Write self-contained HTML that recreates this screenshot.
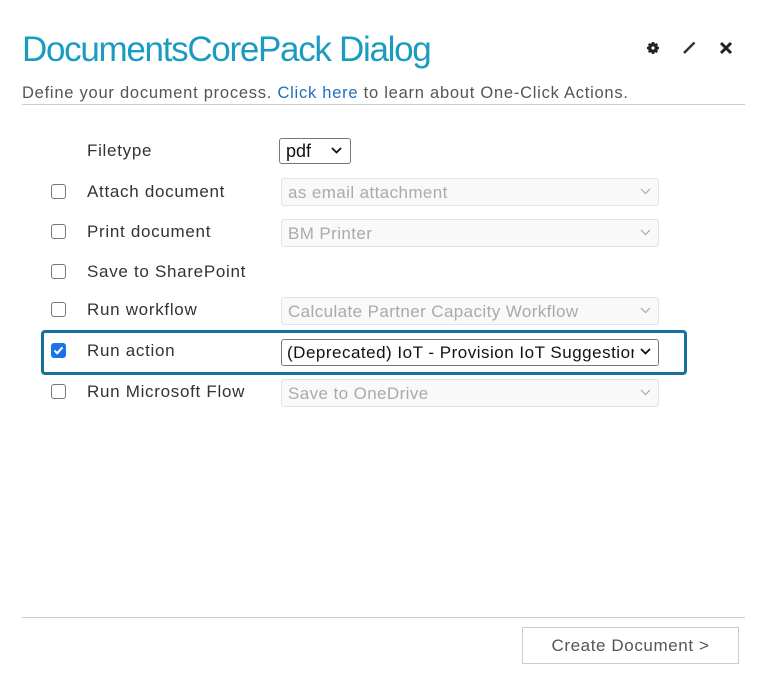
<!DOCTYPE html>
<html><head><meta charset="utf-8"><style>
*{margin:0;padding:0;box-sizing:border-box}
body{width:768px;height:695px;background:#fff;position:relative;font-family:"Liberation Sans",sans-serif;overflow:hidden}
.a{position:absolute;white-space:nowrap}
.title{left:22px;top:30px;font-size:35px;color:#1a9bc0;letter-spacing:-1.3px}
.sub{left:22px;top:84px;font-size:16.5px;color:#555;letter-spacing:0.75px}
.sub span{color:#1e6fbf}
.hr{position:absolute;height:1px;background:#ccc;left:22px;width:723px}
.lbl{left:87px;font-size:17px;color:#333;letter-spacing:0.7px}
.cb{position:absolute;left:51px;width:15px;height:15px;border:1.5px solid #777;border-radius:3px;background:#fff}
.sel{position:absolute;left:281px;width:378px;height:28px;border:1px solid #e3e3e3;border-radius:3px;background:#f9f9f9;color:#aaa;font-size:17px;padding:4px 6px;white-space:nowrap;overflow:hidden;letter-spacing:0.4px}
.ch{position:absolute;right:7px;top:9px}
</style></head><body>
<div class="a title">DocumentsCorePack Dialog</div>
<svg class="a" style="left:646px;top:41px" width="14" height="14" viewBox="0 0 14 14"><circle cx="7" cy="7" r="5" fill="#222"/><g stroke="#222" stroke-width="2.4"><line x1="7" y1="1" x2="7" y2="13"/><line x1="1" y1="7" x2="13" y2="7"/><line x1="2.8" y1="2.8" x2="11.2" y2="11.2"/><line x1="11.2" y1="2.8" x2="2.8" y2="11.2"/></g><circle cx="7" cy="7" r="1.6" fill="#fff"/></svg>
<svg class="a" style="left:682px;top:41px" width="14" height="14" viewBox="0 0 14 14"><line x1="2" y1="12" x2="11" y2="3" stroke="#333" stroke-width="2.6"/><line x1="11" y1="3" x2="12.5" y2="1.5" stroke="#333" stroke-width="2.6"/></svg>
<svg class="a" style="left:719px;top:41px" width="14" height="14" viewBox="0 0 14 14"><g stroke="#222" stroke-width="3"><line x1="2" y1="2" x2="12" y2="12"/><line x1="12" y1="2" x2="2" y2="12"/></g></svg>
<div class="a sub">Define your document process. <span>Click here</span> to learn about One-Click Actions.</div>
<div class="hr" style="top:104px"></div>

<div class="a lbl" style="top:141px">Filetype</div>
<div class="a" style="left:279px;top:138px;width:72px;height:26px;border:1px solid #777;border-radius:3px;font-size:18px;color:#111;padding:2px 0 0 6px">pdf<svg style="position:absolute;right:8px;top:8px" width="11" height="7" viewBox="0 0 11 7"><path d="M1 1l4.5 4.5L10 1" stroke="#111" stroke-width="1.8" fill="none"/></svg></div>

<div class="cb" style="top:184px"></div><div class="a lbl" style="top:182px">Attach document</div>
<div class="sel" style="top:178px">as email attachment<svg class="ch" width="11" height="7" viewBox="0 0 11 7"><path d="M1 1l4.5 4.5L10 1" stroke="#aaa" stroke-width="1.2" fill="none"/></svg></div>

<div class="cb" style="top:224px"></div><div class="a lbl" style="top:222px">Print document</div>
<div class="sel" style="top:219px">BM Printer<svg class="ch" width="11" height="7" viewBox="0 0 11 7"><path d="M1 1l4.5 4.5L10 1" stroke="#aaa" stroke-width="1.2" fill="none"/></svg></div>

<div class="cb" style="top:264px"></div><div class="a lbl" style="top:262px">Save to SharePoint</div>

<div class="cb" style="top:302px"></div><div class="a lbl" style="top:300px">Run workflow</div>
<div class="sel" style="top:297px">Calculate Partner Capacity Workflow<svg class="ch" width="11" height="7" viewBox="0 0 11 7"><path d="M1 1l4.5 4.5L10 1" stroke="#aaa" stroke-width="1.2" fill="none"/></svg></div>

<div class="a" style="left:41px;top:330px;width:646px;height:45px;border:3px solid #1a6fa0;border-radius:4px"></div>
<div class="a" style="left:51px;top:343px;width:15px;height:15px;background:#1a73e8;border-radius:3px"><svg width="15" height="15" viewBox="0 0 15 15" style="display:block"><path d="M3.5 7.5l2.7 2.8 5.3-6" stroke="#fff" stroke-width="2" fill="none"/></svg></div>
<div class="a lbl" style="top:341px">Run action</div>
<div class="a" style="left:281px;top:339px;width:378px;height:27px;border:1px solid #777;border-radius:3px;font-size:17px;color:#111;padding:3px 0 0 5px;overflow:hidden;letter-spacing:0.5px">(Deprecated) IoT - Provision IoT Suggestion<span style="position:absolute;right:0;top:0;width:24px;height:25px;background:#fff"><svg style="position:absolute;left:6px;top:8px" width="11" height="7" viewBox="0 0 11 7"><path d="M1 1l4.5 4.5L10 1" stroke="#111" stroke-width="1.8" fill="none"/></svg></span></div>

<div class="cb" style="top:384px"></div><div class="a lbl" style="top:382px">Run Microsoft Flow</div>
<div class="sel" style="top:379px">Save to OneDrive<svg class="ch" width="11" height="7" viewBox="0 0 11 7"><path d="M1 1l4.5 4.5L10 1" stroke="#aaa" stroke-width="1.2" fill="none"/></svg></div>

<div class="hr" style="top:617px"></div>
<div class="a" style="left:522px;top:627px;width:217px;height:37px;border:1px solid #ccc;font-size:17px;color:#555;text-align:center;line-height:35px;letter-spacing:0.6px">Create Document &gt;</div>
</body></html>
